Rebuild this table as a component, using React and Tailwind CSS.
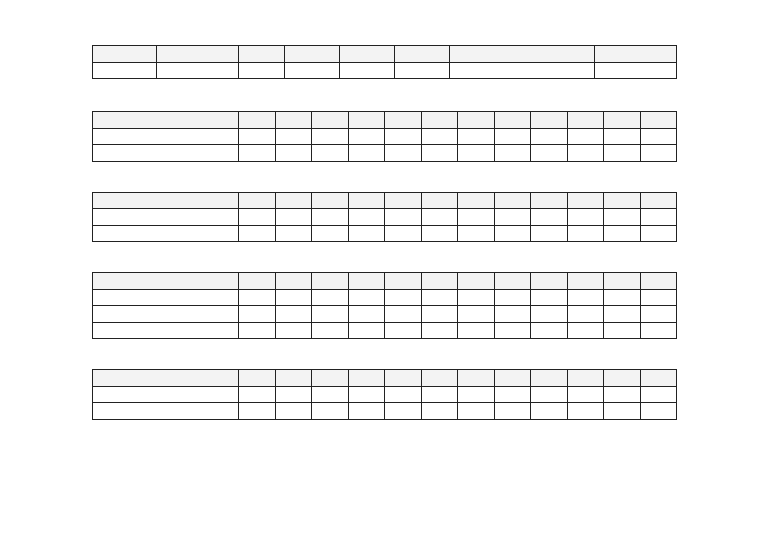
const firstCols = [64, 82, 46, 55, 55, 55, 145, 82];
const gridCols = [146, ...Array(12).fill(36.5)];

function Sheet({ cols, rows }) {
  return (
    <table className="table-fixed border-collapse w-[585px]">
      <colgroup>
        {cols.map((w, i) => (
          <col key={i} style={{ width: w }} />
        ))}
      </colgroup>
      <tbody>
        {Array.from({ length: rows }).map((_, r) => (
          <tr key={r} className={r === 0 ? "h-[16.5px] bg-[#f3f3f3]" : "h-[16.5px] bg-white"}>
            {cols.map((_, c) => (
              <td key={c} className="border border-[#222] p-0"></td>
            ))}
          </tr>
        ))}
      </tbody>
    </table>
  );
}

function App() {
  return (
    <div className="w-[768px] h-[543px] bg-white pt-[45px] pl-[92px] flex flex-col overflow-hidden">
      <Sheet cols={firstCols} rows={2} />
      <div className="mt-[32px]">
        <Sheet cols={gridCols} rows={3} />
      </div>
      <div className="mt-[30px]">
        <Sheet cols={gridCols} rows={3} />
      </div>
      <div className="mt-[30px]">
        <Sheet cols={gridCols} rows={4} />
      </div>
      <div className="mt-[30px]">
        <Sheet cols={gridCols} rows={3} />
      </div>
    </div>
  );
}

export default App;
